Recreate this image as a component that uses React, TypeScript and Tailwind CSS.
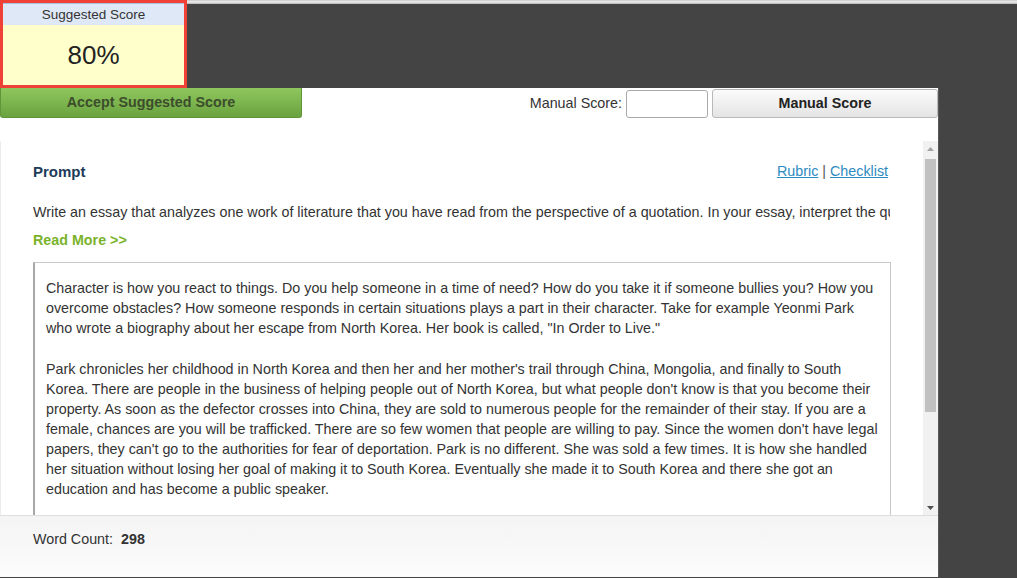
const font = { fontFamily: '"Liberation Sans", Arial, sans-serif' };

const para1 = [
  'Character is how you react to things. Do you help someone in a time of need? How do you take it if someone bullies you? How you',
  'overcome obstacles? How someone responds in certain situations plays a part in their character. Take for example Yeonmi Park',
  'who wrote a biography about her escape from North Korea. Her book is called, "In Order to Live."',
];

const para2 = [
  "Park chronicles her childhood in North Korea and then her and her mother's trail through China, Mongolia, and finally to South",
  "Korea. There are people in the business of helping people out of North Korea, but what people don't know is that you become their",
  'property. As soon as the defector crosses into China, they are sold to numerous people for the remainder of their stay. If you are a',
  "female, chances are you will be trafficked. There are so few women that people are willing to pay. Since the women don't have legal",
  "papers, they can't go to the authorities for fear of deportation. Park is no different. She was sold a few times. It is how she handled",
  'her situation without losing her goal of making it to South Korea. Eventually she made it to South Korea and there she got an',
  'education and has become a public speaker.',
];

const para3 = [
  'In the book, Park describes how she and her mother were separated from the rest of their family and how they survived.',
];

function Para({ lines }: { lines: string[] }) {
  return (
    <p className="mb-[21px]">
      {lines.map((l) => (
        <span key={l} className="block whitespace-nowrap">
          {l}
        </span>
      ))}
    </p>
  );
}

function ScoreBox() {
  return (
    <div className="w-[187px] h-[88px] shrink-0 border-[3px] border-[#ef4136] flex flex-col">
      <div className="h-[22px] pt-[1px] bg-[#dfe8f6] border-t border-[#a9bfe0] flex items-center justify-center text-[13.5px] text-[#333]">
        Suggested Score
      </div>
      <div className="flex-1 bg-[#ffffcc] flex items-center justify-center text-[26px] text-[#222]">80%</div>
    </div>
  );
}

function Scrollbar() {
  return (
    <div className="w-[15px] shrink-0 bg-[#f1f1f1] flex flex-col items-center">
      <div className="h-[15px] w-full flex items-center justify-center">
        <svg width="7" height="4" viewBox="0 0 7 4">
          <path d="M0 4 L3.5 0 L7 4 Z" fill="#a3a3a3" />
        </svg>
      </div>
      <div className="w-[11px] h-[253px] bg-[#c1c1c1] mt-[3px]" />
      <div className="flex-1" />
      <div className="h-[15px] w-full flex items-center justify-center">
        <svg width="7" height="4" viewBox="0 0 7 4">
          <path d="M0 0 L7 0 L3.5 4 Z" fill="#505050" />
        </svg>
      </div>
    </div>
  );
}

export default function App() {
  return (
    <div className="w-[1017px] h-[578px] bg-[#444444] overflow-hidden flex flex-col" style={font}>
      {/* top strip + suggested score */}
      <div className="flex">
        <ScoreBox />
        <div className="flex-1">
          <div className="h-[4px] bg-gradient-to-b from-[#c8c8c8] via-[#f0f0f0] to-[#b0b0b0]" />
        </div>
      </div>

      {/* main panel */}
      <div className="w-[939px] h-[489px] bg-white border-r border-[#5a5a5a] flex flex-col">
        {/* action bar */}
        <div className="h-[30px] flex items-start shrink-0">
          <button className="w-[302px] h-[30px] bg-gradient-to-b from-[#8fc75e] to-[#6aa23f] border border-[#5f9637] border-t-0 rounded-br-[3px] rounded-bl-[3px] text-[14.3px] font-bold text-[#3c4d2c]">
            Accept Suggested Score
          </button>
          <div className="flex-1 flex items-center justify-end h-[30px] pt-[1px]">
            <span className="text-[14.3px] text-[#333] mr-[4px]">Manual Score:</span>
            <input className="w-[82px] h-[28px] border border-[#a8a8a8] rounded-[3px] bg-white mr-[4px]" />
            <button className="w-[226px] h-[29px] -mt-[1px] pt-[1px] bg-gradient-to-b from-[#fbfbfb] to-[#e4e4e4] border border-[#b8b8b8] rounded-[3px] text-[14.3px] font-bold text-[#222]">
              Manual Score
            </button>
          </div>
        </div>

        {/* scroll area */}
        <div className="mt-[23px] flex-1 flex min-h-0 border-l border-[#ececec]">
          <div className="flex-1 overflow-hidden pl-[32px] pr-[31px] pt-[21px]">
            <div className="w-[858px]">
              <div className="flex items-center justify-between h-[20px] pr-[3px]">
                <span className="text-[15px] font-bold text-[#1d3b58]">Prompt</span>
                <span className="text-[14.3px] text-[#555] -mt-[1px]">
                  <a className="underline text-[#2e8bbf]">Rubric</a> | <a className="underline text-[#2e8bbf]">Checklist</a>
                </span>
              </div>
              <p className="mt-[20px] text-[14.3px] leading-[20px] text-[#333] whitespace-nowrap overflow-hidden w-[857px]">
                Write an essay that analyzes one work of literature that you have read from the perspective of a quotation. In your essay, interpret the quotation and explain how it applies.
              </p>
              <div className="mt-[8px] text-[14.3px] leading-[20px] font-bold text-[#7ab32b]">Read More &gt;&gt;</div>
              <div className="mt-[12px] h-[400px] border border-[#c8c8c8] border-l-[#a8a8a8] border-l-2 pl-[11px] pt-[15px] text-[14.3px] leading-[20px] text-[#333]">
                <Para lines={para1} />
                <Para lines={para2} />
                <Para lines={para3} />
              </div>
            </div>
          </div>
          <Scrollbar />
        </div>

        {/* footer */}
        <div className="h-[62px] shrink-0 border-t border-[#dedede] bg-gradient-to-b from-[#f4f4f4] to-[#fcfcfc] flex items-center pl-[33px] pb-[14px] text-[14.3px] text-[#333]">
          <span>Word Count:</span>
          <span className="ml-[8px] font-bold">298</span>
        </div>
      </div>
    </div>
  );
}
